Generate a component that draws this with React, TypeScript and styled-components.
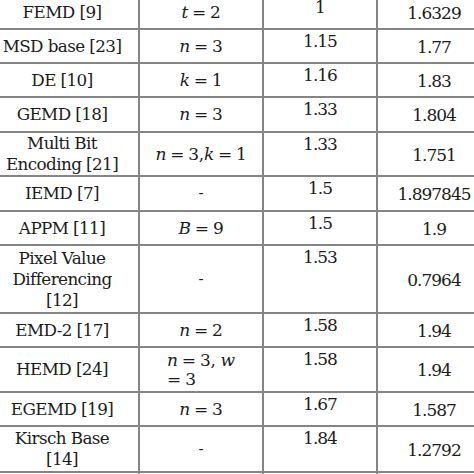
import React from "react";
import styled, { createGlobalStyle } from "styled-components";

const Global = createGlobalStyle`
  html, body {
    margin: 0;
    padding: 0;
    width: 474px;
    height: 474px;
    overflow: hidden;
    background: #ffffff;
  }
  body {
    font-family: "DejaVu Serif", serif;
    color: #1c1c1c;
  }
`;

const Table = styled.div`
  display: flex;
  flex-direction: column;
  gap: 2px;
  padding: 2px;
  width: max-content;
  margin: -6px 0 0 -16px;
  background: #858585;
`;

const Row = styled.div<{ $h: number }>`
  display: grid;
  grid-template-columns: 152px 122px 112px 112px;
  column-gap: 2px;
  height: ${(p) => p.$h}px;
`;

const Cell = styled.div`
  background: #ffffff;
  display: flex;
  justify-content: center;
  text-align: center;
  white-space: nowrap;
`;

const NameCell = styled(Cell)`
  align-items: center;
  font-size: 16.8px;
  letter-spacing: -0.6px;
  line-height: 21px;
`;

const ParamCell = styled(Cell)`
  align-items: center;
  font-size: 17px;
  letter-spacing: -0.3px;
  line-height: 19px;
`;

const RateCell = styled(Cell)`
  align-items: flex-start;
  padding-top: 1px;
  font-size: 17px;
  letter-spacing: -1px;
  line-height: 21px;
`;

const PsnrCell = styled(Cell)`
  align-items: center;
  padding-top: 2px;
  font-size: 17px;
  letter-spacing: -1px;
  line-height: 21px;
`;

const MathBlock = styled.span`
  display: inline-block;
  text-align: left;
`;

const Var = styled.i`
  font-style: italic;
`;

const Eq = styled.span<{ $lead?: boolean }>`
  margin: 0 0.24em 0 ${(p) => (p.$lead ? "0" : "0.24em")};
`;

const Dash = styled.span`
  font-size: 15px;
`;

type M = { v: string; val: string }[];

const MathExpr: React.FC<{ parts: M }> = ({ parts }) => (
  <MathBlock>
    {parts.map((p, i) => (
      <React.Fragment key={i}>
        {i > 0 && ","}
        <Var>{p.v}</Var>
        <Eq>=</Eq>
        {p.val}
      </React.Fragment>
    ))}
  </MathBlock>
);

type RowData = {
  h: number;
  name: React.ReactNode;
  param: React.ReactNode;
  rate: string;
  psnr: string;
};

const rows: RowData[] = [
  { h: 32, name: "FEMD [9]", param: <MathExpr parts={[{ v: "t", val: "2" }]} />, rate: "1", psnr: "1.6329" },
  { h: 32, name: "MSD base [23]", param: <MathExpr parts={[{ v: "n", val: "3" }]} />, rate: "1.15", psnr: "1.77" },
  { h: 32, name: "DE [10]", param: <MathExpr parts={[{ v: "k", val: "1" }]} />, rate: "1.16", psnr: "1.83" },
  { h: 33, name: "GEMD [18]", param: <MathExpr parts={[{ v: "n", val: "3" }]} />, rate: "1.33", psnr: "1.804" },
  {
    h: 42,
    name: (
      <span>
        Multi Bit
        <br />
        Encoding [21]
      </span>
    ),
    param: <MathExpr parts={[{ v: "n", val: "3" }, { v: "k", val: "1" }]} />,
    rate: "1.33",
    psnr: "1.751",
  },
  { h: 33, name: "IEMD [7]", param: <Dash>-</Dash>, rate: "1.5", psnr: "1.897845" },
  { h: 32, name: "APPM [11]", param: <MathExpr parts={[{ v: "B", val: "9" }]} />, rate: "1.5", psnr: "1.9" },
  {
    h: 66,
    name: (
      <span>
        Pixel Value
        <br />
        Differencing
        <br />
        [12]
      </span>
    ),
    param: <Dash>-</Dash>,
    rate: "1.53",
    psnr: "0.7964",
  },
  { h: 32, name: "EMD-2 [17]", param: <MathExpr parts={[{ v: "n", val: "2" }]} />, rate: "1.58", psnr: "1.94" },
  {
    h: 43,
    name: "HEMD [24]",
    param: (
      <MathBlock>
        <Var>n</Var>
        <Eq>=</Eq>3, <Var>w</Var>
        <br />
        <Eq $lead>=</Eq>3
      </MathBlock>
    ),
    rate: "1.58",
    psnr: "1.94",
  },
  { h: 32, name: "EGEMD [19]", param: <MathExpr parts={[{ v: "n", val: "3" }]} />, rate: "1.67", psnr: "1.587" },
  {
    h: 44,
    name: (
      <span>
        Kirsch Base
        <br />
        [14]
      </span>
    ),
    param: <Dash>-</Dash>,
    rate: "1.84",
    psnr: "1.2792",
  },
  { h: 30, name: "", param: "", rate: "", psnr: "" },
];

export default function App() {
  return (
    <>
      <Global />
      <Table>
        {rows.map((r, i) => (
          <Row key={i} $h={r.h}>
            <NameCell>{r.name}</NameCell>
            <ParamCell>{r.param}</ParamCell>
            <RateCell>{r.rate}</RateCell>
            <PsnrCell>{r.psnr}</PsnrCell>
          </Row>
        ))}
      </Table>
    </>
  );
}
